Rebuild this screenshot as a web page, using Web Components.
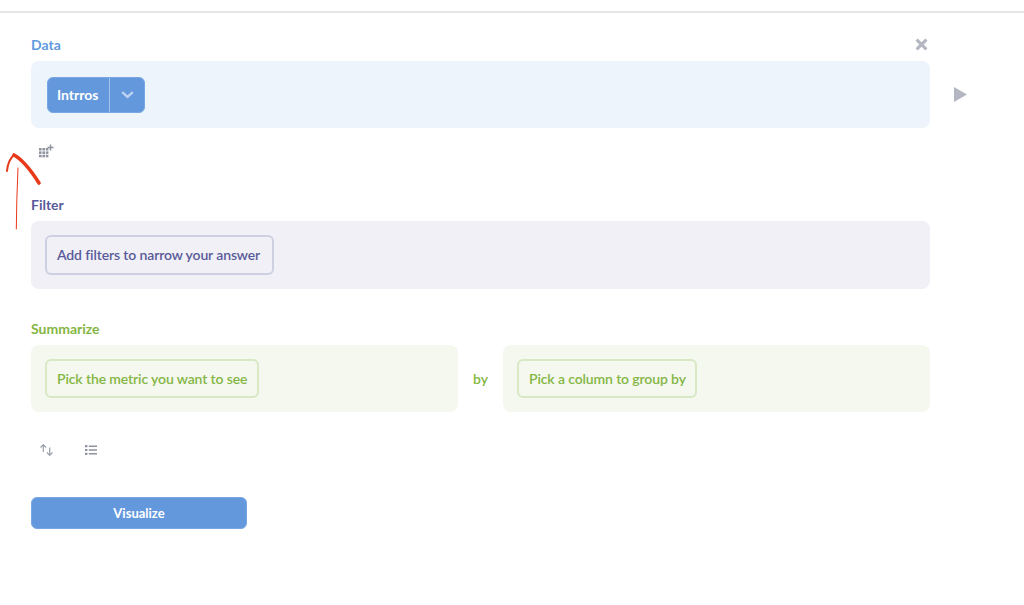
<!DOCTYPE html>
<html>
<head>
<meta charset="utf-8">
<style>
    html, body { margin: 0; padding: 0; background: #fff; }
    body { font-family: Lato, "Open Sans", sans-serif; }
</style>
</head>
<body>
<notebook-page>
    <notebook-section label="Data" color="#5f9ae0" closable>
        <notebook-panel bg="#edf4fc" runnable>
            <table-picker>Intrros</table-picker>
        </notebook-panel>
    </notebook-section>
    <join-action></join-action>
    <notebook-section label="Filter" color="#595a99" style="--top: 37px;">
        <notebook-panel bg="#f0f0f6" style="--panel-h: 68px;">
            <step-button color="#595a99" border="#cfcfe3" w="229" style="padding-bottom: 1px;">Add filters to narrow your answer</step-button>
        </notebook-panel>
    </notebook-section>
    <notebook-section label="Summarize" color="#84b644" style="--top: 30px;">
        <notebook-split>
            <notebook-panel bg="#f5f8ef" style="flex: 1;">
                <step-button color="#84b644" border="#d8e8c4" w="214" style="height: 39px;">Pick the metric you want to see</step-button>
            </notebook-panel>
            <split-word>by</split-word>
            <notebook-panel bg="#f5f8ef" style="flex: 1;">
                <step-button color="#84b644" border="#d8e8c4" w="180" style="height: 39px;">Pick a column to group by</step-button>
            </notebook-panel>
        </notebook-split>
    </notebook-section>
    <step-actions></step-actions>
    <visualize-button>Visualize</visualize-button>
</notebook-page>
<red-scribble></red-scribble>

<script>
class NotebookPage extends HTMLElement {
    constructor() {
        super();
        this.attachShadow({mode: "open"});
    }

    connectedCallback() {
        this.shadowRoot.innerHTML = `
            <style>
                :host {
                    display: block;
                    width: 1024px;
                    height: 605px;
                    box-sizing: border-box;
                    overflow: hidden;
                }
                .topline {
                    height: 2px;
                    margin-top: 11px;
                    background: #e6e6e8;
                }
                .body {
                    padding: 22px 0 0 31px;
                }
            </style>
            <div class="topline"></div>
            <div class="body"><slot></slot></div>
        `;
    }
}

class NotebookSection extends HTMLElement {
    constructor() {
        super();
        this.attachShadow({mode: "open"});
    }

    connectedCallback() {
        const label = this.getAttribute("label");
        const color = this.getAttribute("color");
        const close = this.hasAttribute("closable") ? `
            <svg width="13" height="13" viewBox="0 0 13 13">
                <path d="M1.6 1.6 L11.4 11.4 M11.4 1.6 L1.6 11.4" stroke="#b4b6c2" stroke-width="3.1" fill="none"/>
            </svg>` : "";
        this.shadowRoot.innerHTML = `
            <style>
                :host {
                    display: block;
                    margin-top: var(--top, 0);
                }
                .head {
                    display: flex;
                    justify-content: space-between;
                    align-items: center;
                    width: 897px;
                    height: 20px;
                    box-sizing: border-box;
                    padding-bottom: 2px;
                    margin-bottom: 6px;
                    font-size: 14px;
                    font-weight: 700;
                    color: ${color};
                }
            </style>
            <div class="head"><span>${label}</span>${close}</div>
            <slot></slot>
        `;
    }
}

class NotebookPanel extends HTMLElement {
    constructor() {
        super();
        this.attachShadow({mode: "open"});
    }

    connectedCallback() {
        const play = this.hasAttribute("runnable") ? `
            <svg class="play" width="13" height="15" viewBox="0 0 13 15">
                <path d="M0 0 L13 7.5 L0 15 Z" fill="#b4b6c2"/>
            </svg>` : "";
        const pad = this.hasAttribute("runnable") ? "16px" : "14px";
        this.shadowRoot.innerHTML = `
            <style>
                :host {
                    display: block;
                    position: relative;
                }
                .box {
                    display: flex;
                    align-items: center;
                    width: var(--panel-w, 899px);
                    height: var(--panel-h, 67px);
                    box-sizing: border-box;
                    padding-left: ${pad};
                    background: ${this.getAttribute("bg")};
                    border-radius: 8px;
                }
                .play {
                    position: absolute;
                    left: 923px;
                    top: 26px;
                }
            </style>
            <div class="box"><slot></slot></div>
            ${play}
        `;
    }
}

class NotebookSplit extends HTMLElement {
    constructor() {
        super();
        this.attachShadow({mode: "open"});
    }

    connectedCallback() {
        this.shadowRoot.innerHTML = `
            <style>
                :host {
                    display: flex;
                    align-items: center;
                    width: 899px;
                    --panel-w: 427px;
                }
            </style>
            <slot></slot>
        `;
    }
}

class SplitWord extends HTMLElement {
    constructor() {
        super();
        this.attachShadow({mode: "open"});
    }

    connectedCallback() {
        this.shadowRoot.innerHTML = `
            <style>
                :host {
                    display: block;
                    flex: 0 0 45px;
                    text-align: center;
                    font-size: 14px;
                    font-weight: 600;
                    color: #84b644;
                }
            </style>
            <slot></slot>
        `;
    }
}

class TablePicker extends HTMLElement {
    constructor() {
        super();
        this.attachShadow({mode: "open"});
    }

    connectedCallback() {
        this.shadowRoot.innerHTML = `
            <style>
                :host {
                    display: flex;
                    width: 98px;
                    height: 36px;
                    box-sizing: border-box;
                    background: #6398dd;
                    border: 1px solid #78a7e4;
                    border-radius: 6px;
                    color: #fff;
                    font-size: 14px;
                    font-weight: 700;
                }
                .name {
                    display: flex;
                    align-items: center;
                    width: 62px;
                    padding-left: 9px;
                    box-sizing: border-box;
                    border-right: 1px solid #a3c3ec;
                }
                .arrow {
                    flex: 1;
                    display: flex;
                    align-items: center;
                    justify-content: center;
                }
            </style>
            <div class="name"><slot></slot></div>
            <div class="arrow">
                <svg width="13" height="8" viewBox="0 0 13 8">
                    <path d="M1.2 1.2 L6.5 6 L11.8 1.2" stroke="#bcd3f1" stroke-width="2.4" fill="none"/>
                </svg>
            </div>
        `;
    }
}

class StepButton extends HTMLElement {
    constructor() {
        super();
        this.attachShadow({mode: "open"});
    }

    connectedCallback() {
        this.shadowRoot.innerHTML = `
            <style>
                :host {
                    display: flex;
                    align-items: center;
                    width: ${this.getAttribute("w")}px;
                    height: 40px;
                    box-sizing: border-box;
                    padding-left: 10px;
                    border: 2px solid ${this.getAttribute("border")};
                    border-radius: 6px;
                    color: ${this.getAttribute("color")};
                    font-size: 14px;
                    font-weight: 600;
                    letter-spacing: -0.12px;
                    white-space: nowrap;
                }
            </style>
            <slot></slot>
        `;
    }
}

class JoinAction extends HTMLElement {
    constructor() {
        super();
        this.attachShadow({mode: "open"});
    }

    connectedCallback() {
        this.shadowRoot.innerHTML = `
            <style>
                :host {
                    display: block;
                    height: 14px;
                    padding: 16px 0 0 8px;
                }
                svg { display: block; }
            </style>
            <svg width="15" height="14" viewBox="0 0 15 14" fill="#8f939f">
                <rect x="0" y="4" width="2.600" height="2.500"/><rect x="3.400" y="4" width="2.600" height="2.500"/><rect x="6.800" y="4" width="2.600" height="2.500"/>
                <rect x="0" y="7.400" width="2.600" height="2.500"/><rect x="3.400" y="7.400" width="2.600" height="2.500"/><rect x="6.800" y="7.400" width="2.600" height="2.500"/>
                <rect x="0" y="10.800" width="2.600" height="2.500"/><rect x="3.400" y="10.800" width="2.600" height="2.500"/><rect x="6.800" y="10.800" width="2.600" height="2.500"/>
                <path d="M8.500 3.500 H14.500 M11.500 0.500 V6.500" stroke="#8f939f" stroke-width="1.500" fill="none"/>
            </svg>
        `;
    }
}

class StepActions extends HTMLElement {
    constructor() {
        super();
        this.attachShadow({mode: "open"});
    }

    connectedCallback() {
        this.shadowRoot.innerHTML = `
            <style>
                :host {
                    display: flex;
                    align-items: center;
                    gap: 32px;
                    height: 14px;
                    margin-top: 31px;
                    padding-left: 9px;
                }
                svg { display: block; }
            </style>
            <svg width="13" height="12" viewBox="0 0 13 12" fill="none" stroke="#9a9eaa" stroke-width="1.200">
                <path d="M3.300 8 V0.800 M0.500 3.500 L3.300 0.700 L6.100 3.500"/>
                <path d="M9.700 3.500 V11 M6.900 8.500 L9.700 11.300 L12.500 8.500"/>
            </svg>
            <svg width="12" height="10" viewBox="0 0 12 10" fill="none" stroke="#8f939f" stroke-width="1.500">
                <path d="M0 1.200 H2.400 M0 5 H2.400 M0 8.800 H2.400" stroke-width="2.200"/>
                <path d="M3.800 1.200 H12 M3.800 5 H12 M3.800 8.800 H12"/>
            </svg>
        `;
    }
}

class VisualizeButton extends HTMLElement {
    constructor() {
        super();
        this.attachShadow({mode: "open"});
    }

    connectedCallback() {
        this.shadowRoot.innerHTML = `
            <style>
                :host {
                    display: flex;
                    align-items: center;
                    justify-content: center;
                    width: 216px;
                    height: 32px;
                    margin-top: 40px;
                    box-sizing: border-box;
                    background: #6398dd;
                    border: 1px solid #78a7e4;
                    border-radius: 6px;
                    color: #fff;
                    font-size: 13px;
                    font-weight: 700;
                }
            </style>
            <slot></slot>
        `;
    }
}

// hand drawn arrow on top of the page
class RedScribble extends HTMLElement {
    constructor() {
        super();
        this.attachShadow({mode: "open"});
    }

    connectedCallback() {
        this.shadowRoot.innerHTML = `
            <style>
                :host {
                    position: absolute;
                    left: 0;
                    top: 0;
                    pointer-events: none;
                }
                svg { display: block; }
            </style>
            <svg width="60" height="240" viewBox="0 0 60 240" fill="none" stroke="#e8391a" stroke-linecap="round">
                <path d="M7 171 Q8 160 14 155" stroke-width="2"/>
                <path d="M14 155 Q25 161 39 183" stroke-width="3.600"/>
                <path d="M18 168 Q16.500 200 16.300 229" stroke-width="1"/>
            </svg>
        `;
    }
}

customElements.define("notebook-page", NotebookPage);
customElements.define("notebook-section", NotebookSection);
customElements.define("notebook-panel", NotebookPanel);
customElements.define("notebook-split", NotebookSplit);
customElements.define("split-word", SplitWord);
customElements.define("table-picker", TablePicker);
customElements.define("step-button", StepButton);
customElements.define("join-action", JoinAction);
customElements.define("step-actions", StepActions);
customElements.define("visualize-button", VisualizeButton);
customElements.define("red-scribble", RedScribble);
</script>
</body>
</html>
